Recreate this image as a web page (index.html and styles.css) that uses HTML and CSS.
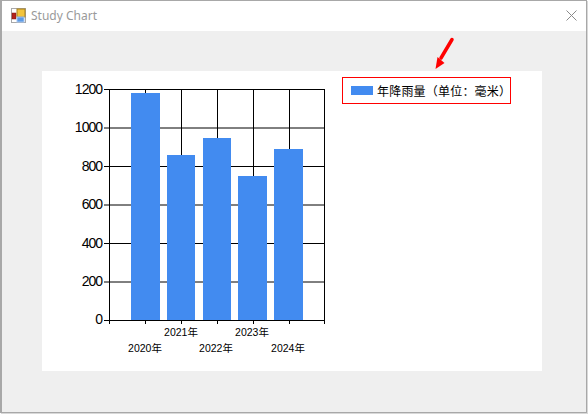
FILE: index.html
```html
<!DOCTYPE html>
<html>
<head>
  <meta charset="UTF-8">
  <title>Study Chart</title>
  <link rel="stylesheet" href="styles.css">
</head>
<body>

  <div class="window">
    <div class="titlebar">
      <svg class="app-icon" width="16" height="16" viewBox="0 0 16 16">
        <rect x="0.5" y="0.5" width="14" height="14" fill="#fff" stroke="#a8a8a8"/>
        <rect x="1" y="5" width="4" height="6" fill="#b3221c" stroke="#7c1410" stroke-width="0.5"/>
        <rect x="6" y="1" width="8" height="8" fill="#f3c43c" stroke="#a57f1e"/>
        <rect x="6" y="9" width="7" height="5" fill="#5d9be6" stroke="#a9c6ee"/>
      </svg>
      <span class="title">Study Chart</span>
      <svg class="close" width="11" height="11" viewBox="0 0 11 11">
        <path d="M0.5 0.5 L10.5 10.5 M10.5 0.5 L0.5 10.5" stroke="#8a8a8a" stroke-width="1" fill="none"/>
      </svg>
    </div>

    <div class="content">
      <div class="chart">
        <svg class="plot" width="283" height="300" viewBox="42 71 283 300">
          <!-- grid -->
          <g class="grid">
            <path d="M109.5 89.5H325M109.5 128H325M109.5 166.5H325M109.5 205H325M109.5 243.5H325M109.5 282H325"/>
            <path d="M145.5 89V320M181.5 89V320M217.5 89V320M253.5 89V320M289.5 89V320M324.5 89V320"/>
          </g>
          <!-- bars -->
          <g class="bars">
            <rect x="131" y="93" width="29" height="227"/>
            <rect x="167" y="155" width="28" height="165"/>
            <rect x="203" y="138" width="28" height="182"/>
            <rect x="238" y="176" width="29" height="144"/>
            <rect x="274" y="149" width="29" height="171"/>
          </g>
          <!-- axes -->
          <g class="axis">
            <path d="M109.5 89V320.5H325"/>
            <path d="M104 89.5H109M104 128H109M104 166.5H109M104 205H109M104 243.5H109M104 282H109M104 320.5H109"/>
            <path d="M109.5 320V324M145.5 320V324M181.5 320V324M217.5 320V324M253.5 320V324M289.5 320V324M324.5 320V324"/>
          </g>
          <g class="y-labels">
            <text x="102" y="94">1200</text>
            <text x="102" y="132">1000</text>
            <text x="102" y="171">800</text>
            <text x="102" y="209">600</text>
            <text x="102" y="248">400</text>
            <text x="102" y="286">200</text>
            <text x="102" y="324">0</text>
          </g>
          <g class="x-labels">
            <text x="145" y="352">2020年</text>
            <text x="181" y="336">2021年</text>
            <text x="216" y="352">2022年</text>
            <text x="252" y="336">2023年</text>
            <text x="288" y="352">2024年</text>
          </g>
        </svg>
        <div class="legend">
          <span class="swatch"></span>
          <span class="legend-text">年降雨量（单位：毫米）</span>
        </div>
      </div>
      <svg class="arrow" width="20" height="34" viewBox="0 0 20 34">
        <path d="M17 2.5 L6 21" stroke="#f00" stroke-width="3.5" stroke-linecap="round" fill="none"/>
        <path d="M0.5 32 L2.5 20 L9.5 26 Z" fill="#f00"/>
      </svg>
    </div>
  </div>

</body>
</html>
```

FILE: styles.css
```css
html, body { margin: 0; padding: 0; }
body {
  width: 588px;
  height: 414px;
  overflow: hidden;
  background: #fff;
  font-family: "Liberation Sans", "Noto Sans CJK SC", sans-serif;
}
.window {
  box-sizing: border-box;
  width: 587px;
  height: 413px;
  border: 1px solid #a8a8a8;
  border-left-width: 2px;
  box-shadow: 1px 1px 0 #d8d8d8;
  display: flex;
  flex-direction: column;
}
.titlebar {
  height: 30px;
  flex: none;
  background: #fff;
  display: flex;
  align-items: center;
  padding: 0 9px 0 9px;
}
.app-icon { flex: none; margin-right: 4px; margin-top: -1px; }
.title {
  flex: 1;
  color: #9a9a9a;
  font-family: "Noto Sans", "Noto Sans CJK SC", sans-serif;
  font-size: 12px;
  margin-top: -1px;
}
.close { flex: none; margin-top: -1px; }
.content {
  position: relative;
  flex: 1;
  background: #efefef;
  padding: 40px 0 0 40px;
}
.chart {
  width: 500px;
  height: 300px;
  background: #fff;
  display: flex;
  align-items: flex-start;
}
.plot { flex: none; display: block; }
.grid path { stroke: #000; stroke-width: 1; fill: none; }
.bars rect { fill: #428bf0; }
.axis path { stroke: #000; stroke-width: 1; fill: none; }
.y-labels text {
  font-size: 14px;
  letter-spacing: -1px;
  text-anchor: end;
  fill: #000;
}
.x-labels text {
  font-size: 10.5px;
  text-anchor: middle;
  fill: #000;
}
.legend {
  box-sizing: border-box;
  width: 169px;
  height: 27px;
  margin: 6px 0 0 17px;
  border: 1px solid #f00;
  display: flex;
  align-items: center;
  padding-left: 8px;
}
.swatch {
  width: 22px;
  height: 9px;
  background: #428bf0;
  margin-right: 4px;
  flex: none;
}
.legend-text {
  font-size: 12px;
  letter-spacing: 0.2px;
  color: #000;
  white-space: nowrap;
}
.arrow { position: absolute; left: 433px; top: 6px; }
```
